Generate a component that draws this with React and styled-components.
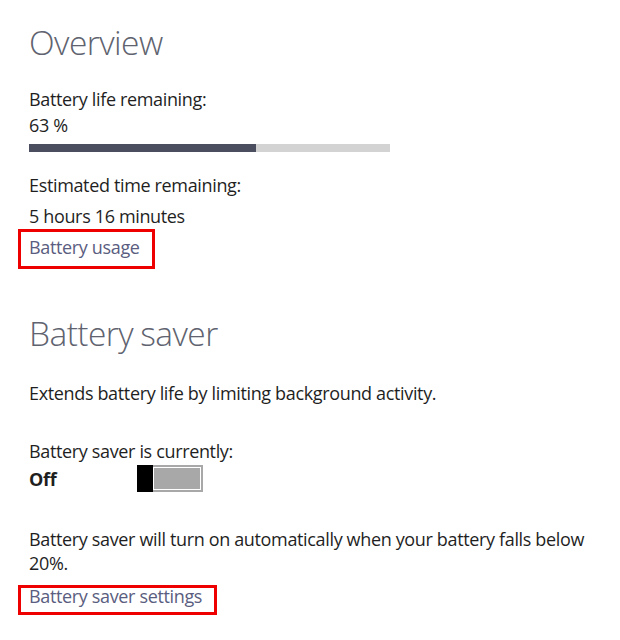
import React from "react";
import styled, { createGlobalStyle } from "styled-components";

const Global = createGlobalStyle`
  html, body { margin: 0; padding: 0; background: #ffffff; }
  body { font-family: "Open Sans", "Liberation Sans", sans-serif; color: #1f1f1f; }
`;

const Page = styled.div`
  display: flex;
  flex-direction: column;
  align-items: flex-start;
  padding: 0 0 0 29px;
  width: 575px;
`;

const Heading = styled.h2`
  margin: ${(p) => p.$mt}px 0 0 0;
  font-family: "Open Sans", "Liberation Sans", sans-serif;
  font-weight: 300;
  font-size: 33.5px;
  letter-spacing: -0.55px;
  word-spacing: -1px;
  line-height: 40px;
  color: #60636f;
`;

const Text = styled.p`
  margin: ${(p) => p.$mt || 0}px 0 0 0;
  font-size: 18px;
  letter-spacing: -0.35px;
  line-height: 24px;
  color: #1f1f1f;
`;

const Progress = styled.div`
  margin-top: ${(p) => p.$mt}px;
  width: 361px;
  height: 8px;
  background: #d3d3d3;
  display: flex;
`;

const ProgressFill = styled.div`
  height: 100%;
  background: #4b4e5e;
`;

const Highlight = styled.div`
  margin: ${(p) => p.$mt}px 0 0 -11px;
  border: 3px solid #ee0000;
  padding: ${(p) => p.$pt}px 12px ${(p) => p.$pb}px 8px;
`;

const Link = styled.a`
  display: block;
  font-size: 18px;
  letter-spacing: -0.35px;
  line-height: ${(p) => p.$lh}px;
  color: #5a5d80;
  text-decoration: none;
  cursor: pointer;
`;

const ToggleRow = styled.div`
  margin-top: ${(p) => p.$mt}px;
  display: flex;
  align-items: center;
`;

const ToggleLabel = styled.span`
  width: 108px;
  font-size: 18px;
  line-height: 24px;
  font-weight: 700;
  letter-spacing: -0.3px;
  color: #1f1f1f;
`;

const Toggle = styled.div`
  display: flex;
  width: 66px;
  height: 27px;
`;

const Thumb = styled.div`
  width: 16px;
  height: 100%;
  background: #000;
`;

const Track = styled.div`
  flex: 1;
  background: #a8a8a8;
  border: 2px solid #a8a8a8;
  border-left: 0;
  box-shadow: inset 0 0 0 1px #ffffff;
`;

export default function App() {
  const level = 63;
  return (
    <>
      <Global />
      <Page>
        <Heading $mt={22}>Overview</Heading>
        <Text $mt={25}>Battery life remaining:</Text>
        <Text $mt={2}>63 %</Text>
        <Progress $mt={7}>
          <ProgressFill style={{ width: `${level}%` }} />
        </Progress>
        <Text $mt={21}>Estimated time remaining:</Text>
        <Text $mt={7}>5 hours 16 minutes</Text>
        <Highlight $mt={1} $pt={3} $pb={7}>
          <Link $lh={24}>Battery usage</Link>
        </Highlight>
        <Heading $mt={44}>Battery saver</Heading>
        <Text $mt={28}>Extends battery life by limiting background activity.</Text>
        <Text $mt={34}>Battery saver is currently:</Text>
        <ToggleRow $mt={2}>
          <ToggleLabel>Off</ToggleLabel>
          <Toggle>
            <Thumb />
            <Track />
          </Toggle>
        </ToggleRow>
        <Text $mt={35}>
          Battery saver will turn on automatically when your battery falls below 20%.
        </Text>
        <Highlight $mt={10} $pt={0} $pb={8}>
          <Link $lh={16}>Battery saver settings</Link>
        </Highlight>
      </Page>
    </>
  );
}
